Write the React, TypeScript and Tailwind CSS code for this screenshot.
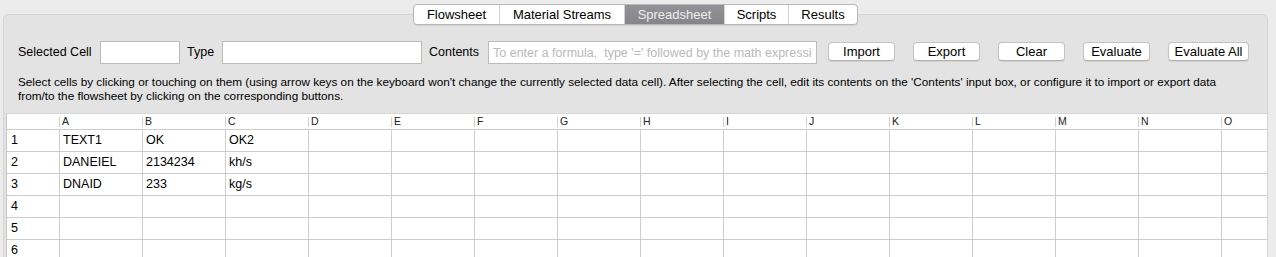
import React from "react";

const cols = ["A", "B", "C", "D", "E", "F", "G", "H", "I", "J", "K", "L", "M", "N", "O"];

const data: Record<number, string[]> = {
  1: ["TEXT1", "OK", "OK2"],
  2: ["DANEIEL", "2134234", "kh/s"],
  3: ["DNAID", "233", "kg/s"],
};

const tabs = [
  { label: "Flowsheet", w: "w-[85px]" },
  { label: "Material Streams", w: "w-[125px]" },
  { label: "Spreadsheet", w: "w-[100px]" },
  { label: "Scripts", w: "w-[64px]" },
  { label: "Results", w: "w-[69px]" },
];

function Btn({ label, className }: { label: string; className: string }) {
  return (
    <button
      className={
        "mt-[1px] h-[19px] rounded-[4px] border border-[#c4c4c4] border-b-[#b0b0b0] bg-white text-[13px] leading-[17px] text-black shadow-[0_1px_1px_rgba(0,0,0,0.08)] " +
        className
      }
    >
      {label}
    </button>
  );
}

export default function App() {
  return (
    <div className="h-[257px] w-[1276px] overflow-hidden bg-[#ececec] pt-[14px] font-['Liberation_Sans',Arial,sans-serif] text-black">
      <div className="ml-[3px] h-[260px] w-[1265px] rounded-[5px] border border-[#d4d4d4] bg-[#e3e3e3]">
        {/* tab strip */}
        <div className="-mt-[11px] flex justify-center">
          <div className="flex h-[21px] overflow-hidden rounded-[4px] border border-[#b8b8b8] bg-white text-[13px] shadow-[0_1px_1px_rgba(0,0,0,0.08)]">
            {tabs.map((t, i) => (
              <div
                key={t.label}
                className={
                  "flex items-center justify-center leading-none " +
                  t.w +
                  (i > 0 ? " border-l border-[#d2d2d2]" : "") +
                  (t.label === "Spreadsheet"
                    ? " border-[#8a8a8e] bg-gradient-to-b from-[#939397] to-[#86868a] text-[#ededed]"
                    : " text-black")
                }
              >
                {t.label}
              </div>
            ))}
          </div>
        </div>

        {/* controls */}
        <div className="mt-[16px] flex items-start pl-[14px] text-[12.5px]">
          <span className="h-[23px] w-[82px] shrink-0 leading-[23px]">Selected Cell</span>
          <input className="h-[23px] w-[80px] border border-[#bcbcbc] bg-white outline-none" />
          <span className="ml-[7px] h-[23px] w-[35px] shrink-0 leading-[23px]">Type</span>
          <input className="h-[23px] w-[200px] border border-[#bcbcbc] bg-white outline-none" />
          <span className="ml-[7px] h-[23px] w-[59px] shrink-0 leading-[23px]">Contents</span>
          <input
            className="h-[23px] w-[329px] border border-[#bcbcbc] bg-white px-[4px] text-[12.5px] outline-none placeholder:text-[#b9b9b9]"
            placeholder="To enter a formula,  type '=' followed by the math expression and press enter"
          />
          <Btn label="Import" className="ml-[11px] w-[67px]" />
          <Btn label="Export" className="ml-[18px] w-[67px]" />
          <Btn label="Clear" className="ml-[18px] w-[67px]" />
          <Btn label="Evaluate" className="ml-[18px] w-[67px]" />
          <Btn label="Evaluate All" className="ml-[18px] w-[81px]" />
        </div>

        {/* help text */}
        <div className="mt-[11px] pl-[14px] text-[11.75px] leading-[14px] whitespace-nowrap">
          <div>
            Select cells by clicking or touching on them (using arrow keys on the keyboard won't change the currently
            selected data cell). After selecting the cell, edit its contents on the 'Contents' input box, or configure it
            to import or export data
          </div>
          <div>from/to the flowsheet by clicking on the corresponding buttons.</div>
        </div>

        {/* grid */}
        <div className="ml-[2px] mt-[10px] w-[1261px] overflow-hidden border-l border-[#c8c8c8] bg-white">
          <div className="flex h-[17px] border-y border-t-[#d6d6d6] border-b-[#cdcdcd] text-[10.5px] text-[#222]">
            <div className="w-[52px] shrink-0" />
            {cols.map((c) => (
              <div key={c} className="flex w-[83px] shrink-0 items-center">
                <div className="h-[10px] w-px bg-[#cfcfcf]" />
                <span className="ml-[2px] leading-none">{c}</span>
              </div>
            ))}
          </div>
          {[1, 2, 3, 4, 5, 6].map((r) => (
            <div key={r} className="flex h-[22px] border-b border-[#cdcdcd] text-[12.5px]">
              <div className="flex w-[53px] shrink-0 items-center border-r border-[#cdcdcd] pl-[4px]">{r}</div>
              {cols.map((c, ci) => (
                <div
                  key={c}
                  className="flex w-[83px] shrink-0 items-center border-r border-[#cdcdcd] pl-[3px]"
                >
                  {data[r]?.[ci] ?? ""}
                </div>
              ))}
            </div>
          ))}
        </div>
      </div>
    </div>
  );
}
